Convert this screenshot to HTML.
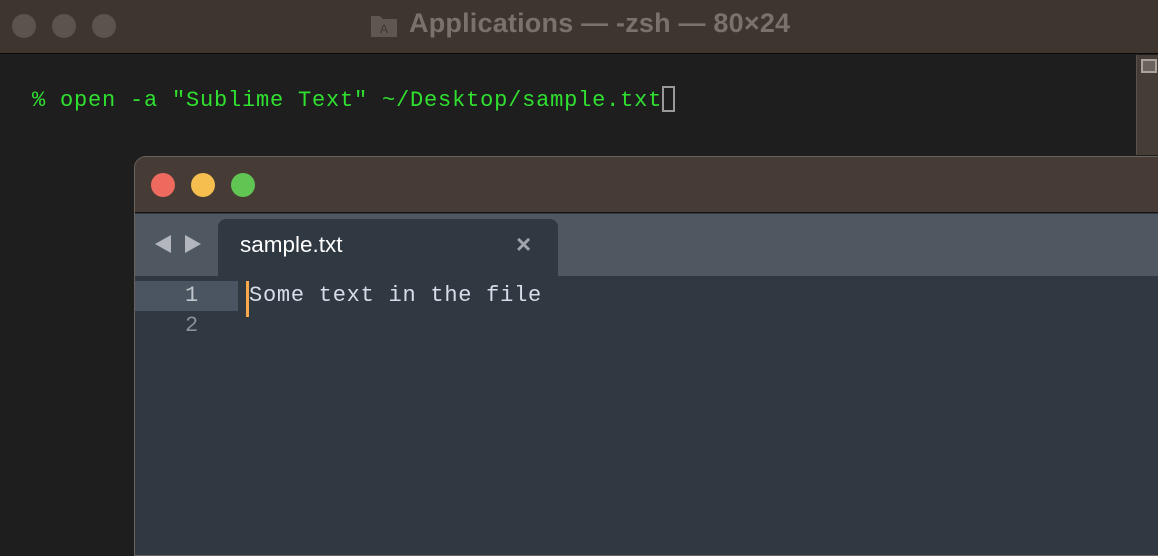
<!DOCTYPE html>
<html><head><style>
*{margin:0;padding:0;box-sizing:border-box}
body{width:1158px;height:554px;overflow:hidden;background:#1e1e1e;position:relative;font-family:"Liberation Sans",sans-serif}
.tbar{position:absolute;left:0;top:0;width:1158px;height:54px;background:#3e352f;border-bottom:1px solid #0d0b0a}
.dot{position:absolute;width:24px;height:24px;border-radius:50%}
.title{position:absolute;left:409px;top:8px;font-size:27px;font-weight:bold;color:#7b716b;letter-spacing:0.2px}
.term{position:absolute;left:32px;top:86px;font-family:"Liberation Mono",monospace;font-size:22px;letter-spacing:0.8px;color:#30e030;white-space:pre}
.cur{display:inline-block;width:13px;height:26px;border:2px solid #999;vertical-align:-6px}
.scroll{position:absolute;left:1136px;top:55px;width:22px;height:100px;background:#453c36;border-left:1px solid #5a514b}
.sw{position:absolute;left:134px;top:156px;width:1030px;height:400px;border-radius:12px 0 0 0;background:#303841;border:1px solid #6a625c;overflow:hidden}
.st{position:absolute;left:0;top:0;width:100%;height:56px;background:#463b35;border-bottom:1px solid #151210}
.tabs{position:absolute;left:0;top:57px;width:100%;height:62px;background:#4f5761}
.tab{position:absolute;left:83px;top:5px;width:340px;height:62px;background:#303841;border-radius:8px 8px 0 0}
.ed{font-family:"Liberation Mono",monospace;font-size:22px;letter-spacing:0.75px;color:#d8dee9}
</style></head><body>
<div class="tbar">
<div class="dot" style="left:12px;top:14px;background:#5c534d"></div>
<div class="dot" style="left:52px;top:14px;background:#5c534d"></div>
<div class="dot" style="left:92px;top:14px;background:#5c534d"></div>
<svg style="position:absolute;left:370px;top:12px" width="28" height="26"><path d="M1 4h9l3 3h14v18H1z" fill="#5e5651"/><text x="14" y="21" font-size="12" fill="#3e352f" text-anchor="middle" font-family="Liberation Sans">A</text></svg>
<div class="title">Applications — -zsh — 80×24</div>
</div>
<div class="term">% open -a "Sublime Text" ~/Desktop/sample.txt<span class="cur"></span></div>
<div class="scroll"><div style="position:absolute;left:4px;top:4px;width:16px;height:14px;border:2px solid #aaa29c;background:#6a625c"></div></div>
<div class="sw">
<div class="st">
<div class="dot" style="left:16px;top:16px;background:#ee6a5e"></div>
<div class="dot" style="left:56px;top:16px;background:#f5be4f"></div>
<div class="dot" style="left:96px;top:16px;background:#61c554"></div>
</div>
<div class="tabs">
<svg style="position:absolute;left:18px;top:20px" width="50" height="22"><path d="M2 10L18 1v18z" fill="#b3b7bd"/><path d="M48 10L32 1v18z" fill="#b3b7bd"/></svg>
<div class="tab">
<div style="position:absolute;left:22px;top:13px;font-size:22.5px;color:#fff">sample.txt</div>
<div style="position:absolute;left:298px;top:10px;font-size:26px;color:#a0a5ab;font-weight:bold">×</div>
</div>
</div>
<div style="position:absolute;left:0;top:124px;width:103px;height:30px;background:#4a5561"></div>
<div class="ed" style="position:absolute;left:50px;top:126px;color:#c0c5cc">1</div>
<div class="ed" style="position:absolute;left:50px;top:156px;color:#8a9099">2</div>
<div style="position:absolute;left:111px;top:124px;width:3px;height:36px;background:#f7a94b"></div>
<div class="ed" style="position:absolute;left:114px;top:126px">Some text in the file</div>
</div>
</body></html>
